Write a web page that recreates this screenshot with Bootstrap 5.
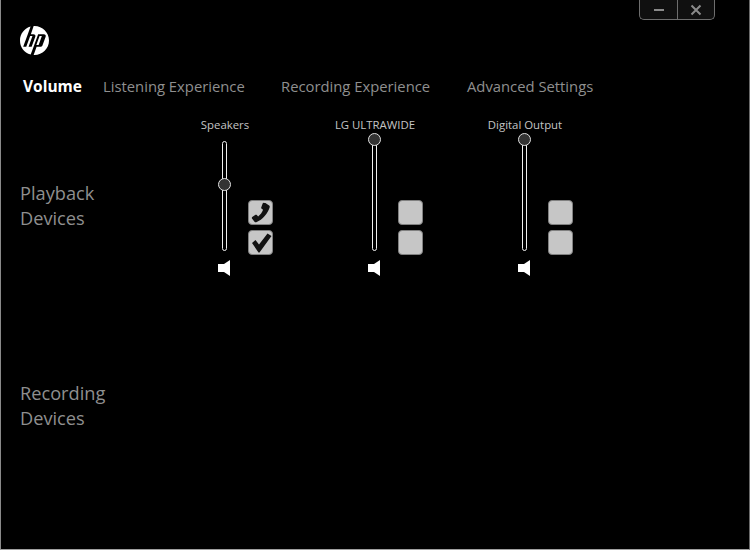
<!DOCTYPE html>
<html lang="en">
<head>
<meta charset="utf-8">
<title>HP Audio Control</title>
<link rel="stylesheet" href="https://cdn.jsdelivr.net/npm/bootstrap@5.3.0/dist/css/bootstrap.min.css">
<style>
html, body { height: 100%; background: #000; }
body { font-family: "Open Sans", "Noto Sans", sans-serif; overflow: hidden; }
.app-win { width: 750px; height: 550px; background: #000; border-left: 1px solid #8a8a8a; border-right: 1px solid #6a6a6a; border-bottom: 1px solid #a0a0a0; }
.win-ctl { height: 20px; padding-right: 34px; }
.win-btn { width: 38px; height: 20px; border: 1px solid #6e6e6e; border-top: 0; background: #101010; }
.win-btn:first-child { border-radius: 0 0 0 5px; border-right: 0; }
.win-btn:last-child { border-radius: 0 0 5px 0; }
.hp-logo { margin: 6px 0 0 19px; width: 29px; height: 29px; display: block; }
.tabs-row { margin-top: 19px; padding-left: 22px; height: 24px; font-size: 14.8px; line-height: 24px; color: #8f8f8f; }
.tab-on { color: #fff; font-weight: 700; font-size: 15.5px; width: 80px; }
.tab-a { width: 178px; }
.tab-b { width: 186px; }
.playback-sec { height: 282px; margin-top: 1px; }
.sec-title { width: 149px; padding-left: 19px; font-size: 18.2px; line-height: 25px; color: #8f8f8f; }
.pb-title { padding-top: 82px; }
.dev-list { padding-top: 18px; }
.dev-col { width: 150px; }
.dev-name { height: 16px; line-height: 16px; font-size: 11.4px; color: #c4c4c4; text-align: center; white-space: nowrap; }
.dev-body { display: grid; grid-template-columns: 1fr 12px 1fr; }
.slide-box { grid-column: 2; grid-row: 1; position: relative; width: 12px; height: 119px; }
.slide-track { position: absolute; left: 3px; top: 8px; width: 5px; height: 110px; border: 1px solid #f0f0f0; border-radius: 3px; background: #000; }
.slide-thumb { position: absolute; left: -1px; width: 13px; height: 13px; border: 1.5px solid #e0e0e0; border-radius: 50%; background: #333; }
.chk-stack { grid-column: 3; grid-row: 1; margin: 67px 0 0 17px; gap: 5px; }
.chk-box { width: 25px; height: 25px; background: #c6c6c6; border: 1px solid #808080; border-radius: 4px; }
.spk-row { grid-column: 2; grid-row: 2; margin-top: 5px; margin-left: -1px; }
</style>
</head>
<body>
<div class="app-win d-flex flex-column">
  <div class="win-ctl d-flex justify-content-end">
    <div class="win-btn d-flex align-items-center justify-content-center">
      <svg width="12" height="12" viewBox="0 0 12 12"><rect x="1" y="5" width="10" height="2" fill="#8a8a8a"/></svg>
    </div>
    <div class="win-btn d-flex align-items-center justify-content-center">
      <svg width="12" height="12" viewBox="0 0 12 12"><path d="M1.5 1.5l9 9M10.5 1.5l-9 9" stroke="#8a8a8a" stroke-width="2" fill="none"/></svg>
    </div>
  </div>
  <svg class="hp-logo" viewBox="0 0 24 24"><path fill="#fff" fill-rule="evenodd" d="M12 24c-.24 0-.478-.008-.714-.02l2.453-6.742h3.376c.593 0 1.244-.456 1.447-1.014l2.664-7.32c.436-1.198-.25-2.178-1.524-2.178h-4.684l-3.93 10.8h-.001l-2.228 6.122C3.095 22.132 0 17.429 0 12 0 6.5 3.7 1.87 8.747.447L6.452 6.75H6.45L2.635 17.238h2.54l3.243-8.912h1.909l-3.243 8.912h2.54l3.03-8.325c.436-1.198-.25-2.178-1.523-2.178h-2.136L11.289.02C11.525.008 11.762 0 12 0c6.627 0 12 5.373 12 12s-5.373 12-12 12zm6.09-15.674h-1.909l-2.673 7.344h1.909l2.673-7.344z"/></svg>
  <div class="tabs-row d-flex">
    <div class="tab-on">Volume</div>
    <div class="tab-a">Listening Experience</div>
    <div class="tab-b">Recording Experience</div>
    <div>Advanced Settings</div>
  </div>
  <div class="playback-sec d-flex">
    <div class="sec-title pb-title">Playback<br>Devices</div>
    <div class="dev-list d-flex">
      <div class="dev-col">
        <div class="dev-name">Speakers</div>
        <div class="dev-body">
          <div class="slide-box"><div class="slide-track"></div><div class="slide-thumb" style="top:45px"></div></div>
          <div class="chk-stack d-flex flex-column">
            <div class="chk-box d-flex align-items-center justify-content-center">
              <svg width="22" height="22" viewBox="0 0 20 20"><path fill="#111" d="M14 .8l3.4 2.4c.5.4.7 1 .5 1.6-1.6 5.6-6.4 11.2-12.2 13.6-.6.2-1.2.1-1.6-.4L1.8 15c-.3-.4-.2-1 .2-1.3l3-2c.4-.2.9-.2 1.2.2l1.2 1.2c1.9-1.3 3.8-3.9 4.5-6l-1.3-1c-.4-.3-.6-.8-.4-1.2l1.3-3.6c.3-.6 1-.8 1.5-.5z"/></svg>
            </div>
            <div class="chk-box d-flex align-items-center justify-content-center">
              <svg width="22" height="22" viewBox="0 0 22 22"><path fill="#111" d="M2 11l3.5-3 3.5 4.5L17.5 1.5l4 2.5L9.5 20.5h-1z"/></svg>
            </div>
          </div>
          <div class="spk-row">
            <svg class="d-block" width="14" height="16" viewBox="0 0 14 16"><path fill="#fff" d="M0 4h6l6-4v16l-6-4H0z"/></svg>
          </div>
        </div>
      </div>
      <div class="dev-col">
        <div class="dev-name">LG ULTRAWIDE</div>
        <div class="dev-body">
          <div class="slide-box"><div class="slide-track"></div><div class="slide-thumb" style="top:0"></div></div>
          <div class="chk-stack d-flex flex-column"><div class="chk-box"></div><div class="chk-box"></div></div>
          <div class="spk-row"><svg class="d-block" width="14" height="16" viewBox="0 0 14 16"><path fill="#fff" d="M0 4h6l6-4v16l-6-4H0z"/></svg></div>
        </div>
      </div>
      <div class="dev-col">
        <div class="dev-name">Digital Output</div>
        <div class="dev-body">
          <div class="slide-box"><div class="slide-track"></div><div class="slide-thumb" style="top:0"></div></div>
          <div class="chk-stack d-flex flex-column"><div class="chk-box"></div><div class="chk-box"></div></div>
          <div class="spk-row"><svg class="d-block" width="14" height="16" viewBox="0 0 14 16"><path fill="#fff" d="M0 4h6l6-4v16l-6-4H0z"/></svg></div>
        </div>
      </div>
    </div>
  </div>
  <div class="d-flex">
    <div class="sec-title">Recording<br>Devices</div>
  </div>
</div>
<script src="https://cdn.jsdelivr.net/npm/bootstrap@5.3.0/dist/js/bootstrap.bundle.min.js"></script>
</body>
</html>
